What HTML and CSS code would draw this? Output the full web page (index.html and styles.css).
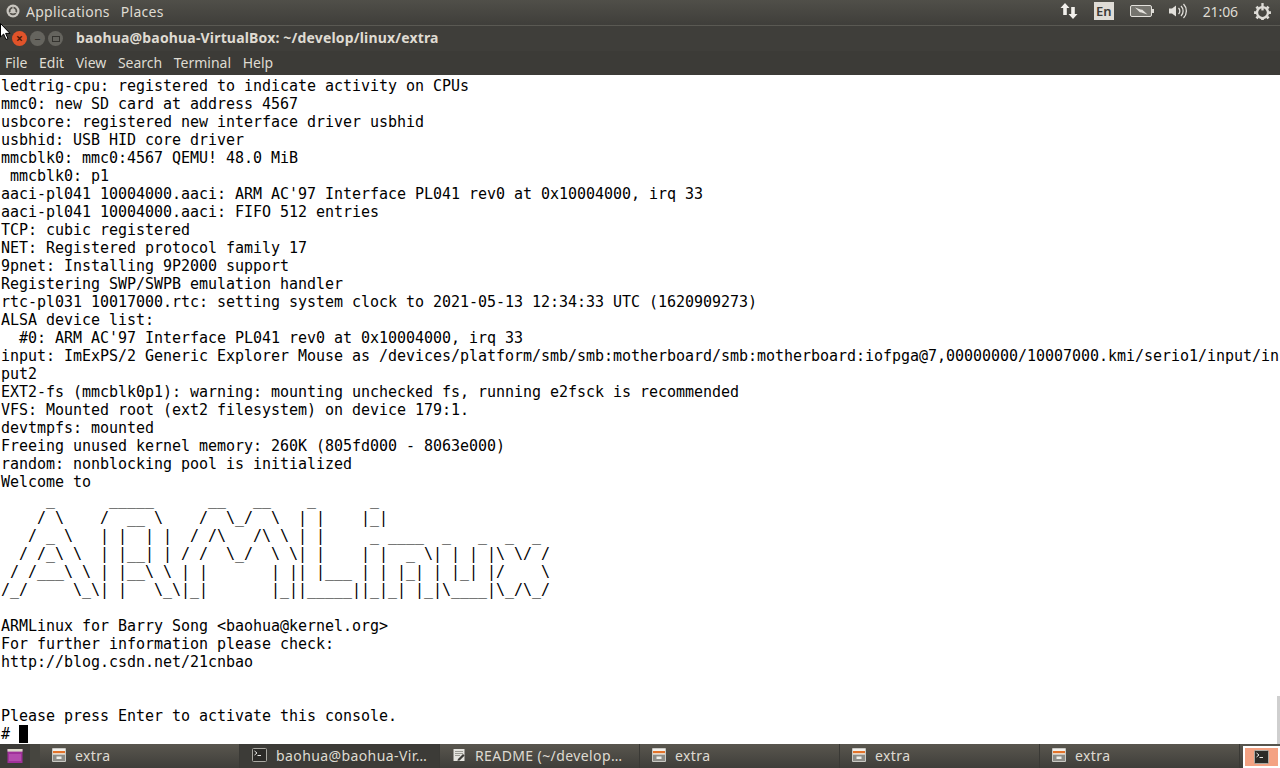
FILE: index.html
```html
<!DOCTYPE html>
<html lang="en">
<head>
<meta charset="utf-8">
<title>baohua@baohua-VirtualBox: ~/develop/linux/extra</title>
<link rel="stylesheet" href="styles.css">
</head>
<body>
<div class="screen">
  <header class="panel">
    <svg class="logo" width="14" height="14" viewBox="0 0 14 14"><circle cx="7" cy="7" r="6.5" fill="#c9c6bf"/><circle cx="7" cy="7" r="3.4" fill="none" stroke="#55534d" stroke-width="1.8"/><circle cx="7" cy="7" r="1.6" fill="#c9c6bf"/><path d="M7 7 L7 2 M7 7 L2.6 9.5 M7 7 L11.4 9.5" stroke="#c9c6bf" stroke-width="1"/></svg>
    <span class="panel-item">Applications</span>
    <span class="panel-item">Places</span>
    <div class="tray">
      <svg class="t-net" width="18" height="18" viewBox="0 0 18 18"><path d="M5 1 L9.5 6 H6.8 V13 H3.2 V6 H0.5 Z M13 17 L8.5 12 H11.2 V5 H14.8 V12 H17.5 Z" fill="#f2f0ec"/></svg>
      <span class="t-lang">En</span>
      <svg class="t-bat" width="24" height="14" viewBox="0 0 24 14"><rect x="0.5" y="1.5" width="21" height="11" rx="1.5" fill="#75746e" stroke="#e2e0db"/><rect x="22" y="5" width="2" height="4" fill="#dcdad5"/><path d="M5 3.5 L12 6 L11.2 4.8 L17.5 10.5 L10 8 L10.8 9.2 Z" fill="#e4e2dd"/></svg>
      <svg class="t-vol" width="20" height="18" viewBox="0 0 20 18"><path d="M1 6.5 H4 L8 3.5 V14.5 L4 11.5 H1 Z" fill="#e2e0db"/><path d="M10.5 6 A4 4 0 0 1 10.5 12 M13 4 A7 7 0 0 1 13 14 M15.5 2 A10 10 0 0 1 15.5 16" fill="none" stroke="#e2e0db" stroke-width="1.3"/></svg>
      <span class="clock">21:06</span>
      <svg class="t-gear" width="19" height="19" viewBox="0 0 18 18"><g stroke="#dfddd8" fill="none"><circle cx="9" cy="10" r="5.2" stroke-width="2.2"/><path d="M9 1 V8" stroke-width="2.2"/><path d="M3.2 4.5 L4.8 6 M14.8 4.5 L13.2 6 M1 10 H3.2 M17 10 H14.8 M3.2 15.5 L4.8 14 M14.8 15.5 L13.2 14 M9 17 V15.5" stroke-width="2.6"/></g></svg>
    </div>
  </header>

  <div class="titlebar">
    <div class="win-btns">
      <span class="win-btn close">×</span>
      <span class="win-btn">–</span>
      <span class="win-btn"><i class="max"></i></span>
    </div>
    <span class="title">baohua@baohua-VirtualBox: ~/develop/linux/extra</span>
  </div>

  <nav class="menubar">
    <span>File</span><span>Edit</span><span>View</span><span>Search</span><span>Terminal</span><span>Help</span>
  </nav>

  <main class="terminal">
<pre class="term-text">ledtrig-cpu: registered to indicate activity on CPUs
mmc0: new SD card at address 4567
usbcore: registered new interface driver usbhid
usbhid: USB HID core driver
mmcblk0: mmc0:4567 QEMU! 48.0 MiB
 mmcblk0: p1
aaci-pl041 10004000.aaci: ARM AC'97 Interface PL041 rev0 at 0x10004000, irq 33
aaci-pl041 10004000.aaci: FIFO 512 entries
TCP: cubic registered
NET: Registered protocol family 17
9pnet: Installing 9P2000 support
Registering SWP/SWPB emulation handler
rtc-pl031 10017000.rtc: setting system clock to 2021-05-13 12:34:33 UTC (1620909273)
ALSA device list:
  #0: ARM AC'97 Interface PL041 rev0 at 0x10004000, irq 33
input: ImExPS/2 Generic Explorer Mouse as /devices/platform/smb/smb:motherboard/smb:motherboard:iofpga@7,00000000/10007000.kmi/serio1/input/in
put2
EXT2-fs (mmcblk0p1): warning: mounting unchecked fs, running e2fsck is recommended
VFS: Mounted root (ext2 filesystem) on device 179:1.
devtmpfs: mounted
Freeing unused kernel memory: 260K (805fd000 - 8063e000)
random: nonblocking pool is initialized
Welcome to
     _      _____      __   __    _      _
    / \    /  __ \    /  \_/  \  | |    |_|
   / _ \   | |  | |  / /\   /\ \ | |     _ ____  _   _  _  _
  / /_\ \  | |__| | / /  \_/  \ \| |    | |  _ \| | | |\ \/ /
 / /___\ \ | |__\ \ | |       | || |___ | | |_| | |_| |/    \
/_/     \_\| |   \_\|_|       |_||_____||_|_| |_|\____|\_/\_/

ARMLinux for Barry Song &lt;baohua@kernel.org&gt;
For further information please check:
http://blog.csdn.net/21cnbao


Please press Enter to activate this console.
# <span class="cursor"> </span></pre>
    <div class="scroll-thumb"></div>
  </main>

  <footer class="taskbar">
    <div class="show-desktop">
      <svg width="16" height="16" viewBox="0 0 16 16"><rect x="0.5" y="1" width="15" height="14" fill="#a0309a"/><rect x="0.5" y="1" width="15" height="2.6" fill="#d9d6c8"/><rect x="2" y="6" width="12" height="7" fill="#b44cae"/></svg>
    </div>
    <div class="grip"></div>
    <div class="task"><svg class="ficon" width="14" height="14" viewBox="0 0 14 14"><use href="#cabinet"/></svg><span>extra</span></div>
    <div class="task active"><svg class="ficon" width="15" height="14" viewBox="0 0 15 14"><use href="#termicon"/></svg><span>baohua@baohua-Vir…</span></div>
    <div class="task"><svg class="ficon" width="14" height="14" viewBox="0 0 14 14"><path d="M1.5 1 H12.5 V13 H1.5 Z" fill="#e4e3de"/><path d="M3 3.5 H11 M3 5.5 H11 M3 7.5 H8" stroke="#9a9992"/><path d="M6 11 L11 6 L12.6 7.4 L7.6 12.4 L5.4 12.8 Z" fill="#3c3b37"/></svg><span>README (~/develop…</span></div>
    <div class="task"><svg class="ficon" width="14" height="14" viewBox="0 0 14 14"><use href="#cabinet"/></svg><span>extra</span></div>
    <div class="task"><svg class="ficon" width="14" height="14" viewBox="0 0 14 14"><use href="#cabinet"/></svg><span>extra</span></div>
    <div class="task"><svg class="ficon" width="14" height="14" viewBox="0 0 14 14"><use href="#cabinet"/></svg><span>extra</span></div>
    <div class="workspace"><svg width="15" height="14" viewBox="0 0 15 14"><use href="#termicon"/></svg></div>
  </footer>

  <svg class="pointer" width="12" height="18" viewBox="0 0 12 18"><path d="M0.5 0.5 V14 L3.6 11 L6 16.5 L8 15.6 L5.6 10.4 H10 Z" fill="#fff" stroke="#000"/></svg>

  <svg class="defs" width="0" height="0">
    <defs>
      <g id="cabinet"><rect x="0" y="0" width="14" height="14" rx="1" fill="#c9c8c3"/><rect x="1" y="1" width="12" height="2" fill="#f0f0ec"/><rect x="1" y="3" width="12" height="2" fill="#e2722a"/><rect x="1" y="5" width="12" height="1" fill="#f0d6bd"/><rect x="1" y="7" width="12" height="6" fill="#8d8c87"/><rect x="4.5" y="8.5" width="5" height="2.5" fill="#eeeeea"/></g>
      <g id="termicon"><rect x="0.5" y="0.5" width="14" height="13" rx="1" fill="#2c2b28" stroke="#a9a8a2"/><path d="M2.5 3 L5 5 L2.5 7" fill="none" stroke="#e8e8e4"/><path d="M5.5 7.5 H9" stroke="#e8e8e4"/></g>
    </defs>
  </svg>
</div>
</body>
</html>
```
FILE: styles.css
```css
* { box-sizing: border-box; }
html, body { margin: 0; padding: 0; }
body { width: 1280px; height: 768px; overflow: hidden; background: #fff; }
.screen { position: relative; width: 1280px; height: 768px; display: flex; flex-direction: column; font-family: "Noto Sans", "Open Sans", sans-serif; }

.panel { height: 26px; flex: none; display: flex; align-items: center; padding: 0 0 3px 6px; background: linear-gradient(#504f49, #3f3e3a); border-bottom: 1px solid #5a5953; color: #dfdbd2; font-size: 14px; letter-spacing: 0.28px; }
.logo { margin-right: 6px; }
.panel-item { margin-right: 11px; }
.tray { margin-left: auto; display: flex; align-items: center; }
.t-net { margin-right: 16px; }
.t-lang { width: 20px; height: 18px; background: #dfdcd6; color: #3c3b37; font-size: 13px; font-weight: 600; text-align: center; line-height: 19px; margin-right: 16px; letter-spacing: 0; }
.t-bat { margin-right: 14px; }
.t-vol { margin-right: 15px; }
.clock { margin-right: 15px; letter-spacing: -0.1px; }
.t-gear { margin-right: 8px; }

.titlebar { height: 25px; flex: none; display: flex; align-items: center; padding: 0 0 2px 12px; background: #3f3e3a; color: #dfdbd2; }
.win-btns { display: flex; gap: 3px; width: 64px; padding-top: 2px; }
.win-btn { width: 15px; height: 15px; border-radius: 50%; background: #65645e; color: #33322e; font-size: 12px; line-height: 14px; text-align: center; display: flex; align-items: center; justify-content: center; }
.win-btn.close { background: #e0532a; color: #4a1a08; font-weight: 700; }
.max { display: block; width: 8px; height: 6px; border: 1px solid #33322e; }
.title { font-size: 14px; font-weight: 700; letter-spacing: 0.17px; }

.menubar { height: 24px; flex: none; display: flex; align-items: center; padding: 0 0 2px 5px; gap: 11.6px; background: #3c3b37; color: #dfdbd2; font-size: 14px; }

.terminal { position: relative; flex: 1; min-height: 0; background: #fff; overflow: hidden; }
.term-text { margin: 0; padding: 2px 0 0 1px; font-family: "DejaVu Sans Mono", monospace; font-size: 15px; line-height: 18px; letter-spacing: -0.03px; color: #000; white-space: pre; }
.cursor { display: inline-block; width: 9px; height: 18px; background: #000; vertical-align: top; }
.scroll-thumb { position: absolute; right: 0; bottom: 0; width: 3px; height: 48px; background: #cfcfcf; }

.taskbar { height: 24px; flex: none; display: flex; align-items: stretch; background: linear-gradient(#59564e, #3f3e3a); color: #dfdbd2; font-size: 14px; }
.show-desktop { width: 30px; display: flex; align-items: center; justify-content: center; background: #3c3b37; }
.grip { width: 10px; background: #46453f; }
.task { width: 200px; display: flex; align-items: center; padding: 0 0 2px 12px; border-right: 1px solid #3a3935; letter-spacing: 0.4px; }
.task span { margin-left: 9px; white-space: nowrap; }
.task.active { background: #3c3b37; }
.ficon { flex: none; }
.workspace { width: 37px; margin: 2px 0 0 3px; background: #f4a283; border: 2px solid #fff; display: flex; align-items: center; justify-content: center; }

.pointer { position: absolute; left: 0; top: 23px; }
.defs { position: absolute; left: 0; top: 0; }
```
